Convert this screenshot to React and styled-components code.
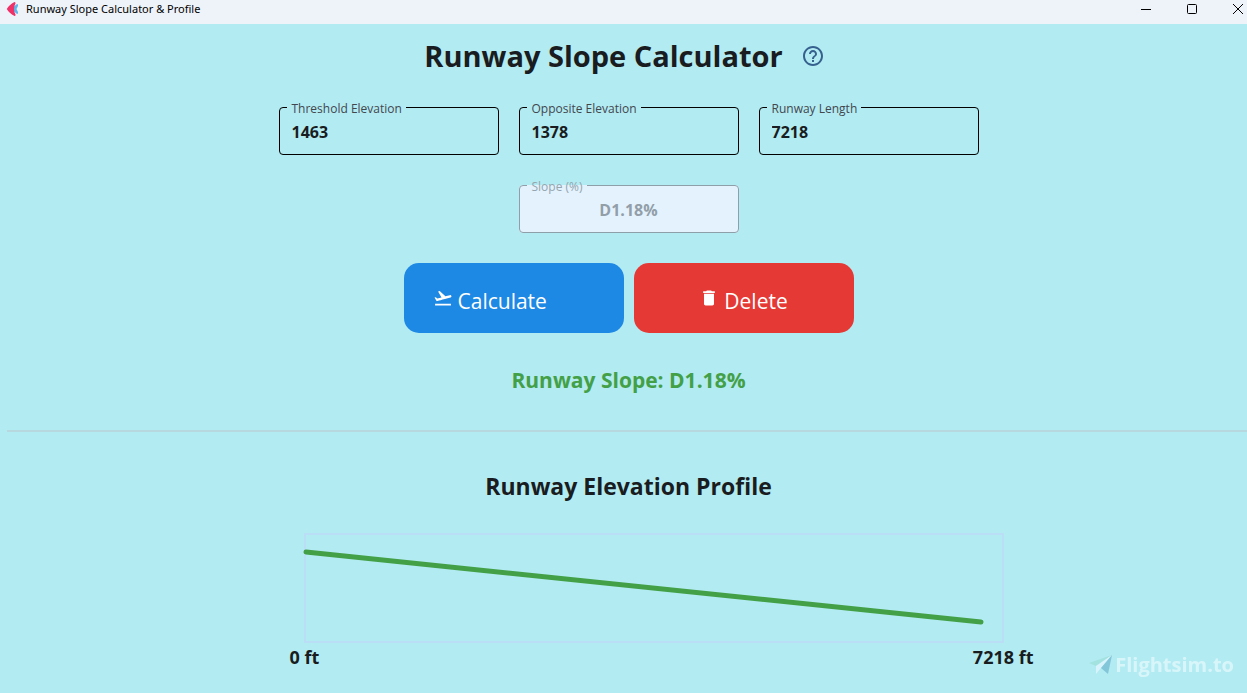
import React, { useState } from 'react'
import styled, { createGlobalStyle } from 'styled-components'
import { MdDelete, MdFlightTakeoff, MdHelpOutline } from 'react-icons/md'

const GlobalStyle = createGlobalStyle`
    * {
        box-sizing: border-box;
    }
    body {
        margin: 0;
        background-color: #b2ebf2;
        color: #191c20;
        font-family: "Open Sans", "Noto Sans", sans-serif;
    }
    button, input {
        font-family: inherit;
    }
`

const Window = styled.div`
    min-height: 100vh;
    display: flex;
    flex-direction: column;
`

const TitleBar = styled.header`
    height: 24px;
    padding: 0 1px 7px 6px;
    display: flex;
    align-items: center;
    background-color: #eef3fa;
    color: #000;
`

const AppTitle = styled.span`
    flex: 1;
    margin-left: 7px;
    font-family: "Noto Sans", sans-serif;
    font-size: 11px;
    line-height: 16px;
`

const WindowControls = styled.div`
    display: flex;
    gap: 30px;
`

const WindowButton = styled.button`
    width: 16px;
    height: 16px;
    padding: 0;
    border: none;
    background: none;
    display: grid;
    place-items: center;
    cursor: pointer;
`

const Main = styled.main`
    flex: 1;
    display: flex;
    flex-direction: column;
`

const Section = styled.section`
    padding: ${({ $top }) => $top}px 0 0 10px;
    display: flex;
    flex-direction: column;
    align-items: center;
`

const Heading = styled.div`
    display: flex;
    align-items: center;
    gap: 10px;
    margin-bottom: 23px;
`

const Title = styled.h1`
    margin: 0;
    font-size: 29px;
    font-weight: 700;
    line-height: 40px;
`

const HelpButton = styled.button`
    width: 40px;
    height: 40px;
    padding: 0;
    border: none;
    border-radius: 50%;
    background: none;
    color: #36618e;
    font-size: 24px;
    display: grid;
    place-items: center;
    cursor: pointer;
`

const Row = styled.div`
    display: flex;
    flex-wrap: wrap;
    justify-content: center;
    gap: ${({ $gap }) => $gap}px;
    margin-bottom: ${({ $bottom }) => $bottom}px;
`

const FieldBox = styled.fieldset`
    width: 220px;
    height: 56px;
    min-width: 0;
    margin: 0;
    padding: 0 7px;
    border: 1px solid ${({ $disabled }) => ($disabled ? '#8f9fa9' : '#000')};
    border-radius: 4px;
    background-color: ${({ $disabled }) => ($disabled ? '#e3f2fd' : 'transparent')};
`

const Legend = styled.legend`
    height: 17px;
    padding: 1px 4px 0 5px;
    color: ${({ $disabled }) => ($disabled ? '#93a5ad' : '#42474e')};
    font-size: 12px;
    line-height: 17px;
`

const Input = styled.input`
    display: block;
    width: 100%;
    height: 32px;
    padding: 0 5px;
    border: none;
    outline: none;
    background: none;
    color: #191c20;
    font-size: 16px;
    font-weight: 700;
    text-align: ${({ $center }) => ($center ? 'center' : 'left')};
    &:disabled {
        color: #929ea8;
    }
`

const ActionButton = styled.button`
    width: 220px;
    height: 70px;
    padding: 0 29px;
    border: none;
    border-radius: 15px;
    background-color: ${({ $color }) => $color};
    color: #fff;
    font-size: 21px;
    line-height: 28px;
    display: flex;
    align-items: center;
    justify-content: ${({ $align }) => $align};
    gap: 5px;
    cursor: pointer;
    svg {
        width: 20px;
        height: 20px;
    }
    span {
        padding-top: 6px;
    }
`

const Result = styled.output`
    color: #43a047;
    font-size: 21px;
    font-weight: 700;
    line-height: 28px;
`

const Divider = styled.hr`
    width: auto;
    margin: 36px 0 0 7px;
    border: none;
    border-top: 2px solid #b8d8e0;
`

const Subtitle = styled.h2`
    margin: 0 0 31px;
    font-size: 23px;
    font-weight: 700;
    line-height: 32px;
`

const Profile = styled.div`
    width: 100%;
    max-width: 810px;
`

const ChartFrame = styled.div`
    margin: 0 30px 0 80px;
    border: 2px solid #b9def5;
    svg {
        display: block;
        width: 100%;
    }
`

const Scale = styled.div`
    display: flex;
    justify-content: space-between;
    padding-left: 66px;
    font-size: 18px;
    font-weight: 700;
    line-height: 28px;
`

const Watermark = styled.a`
    position: fixed;
    right: 13px;
    bottom: 12px;
    display: flex;
    align-items: center;
    gap: 2px;
    color: #d8f6fa;
    font-size: 20px;
    font-weight: 700;
    line-height: 32px;
    text-decoration: none;
`

const AppLogo = () => (
    <svg width="13" height="16" viewBox="0 0 13 16" aria-hidden="true">
        <path d="M5 8 11 3Q12.500 3 12 5L10.500 8l1.500 3q.5 2-1 2Z" fill="#5cb8ea" />
        <path d="M.8 8Q3 4 8.500 1 9.800 1 9.500 2.500 8 5 8 8t1.500 5.500q.3 1.500-1 1.500Q3 12 .8 8Z" fill="#ee3167" />
    </svg>
)

const PlaneLogo = () => (
    <svg width="24" height="22" viewBox="0 0 24 22" aria-hidden="true">
        <path d="M23 1 0 9l7 3Z" fill="#a2e2df" />
        <path d="M23 1 7 12v8Z" fill="#d8f3fb" />
        <path d="M23 1 7 20l5-6Z" fill="#9bd4e2" />
        <path d="M23 1 12 14l7 6Z" fill="#83c5d9" />
    </svg>
)

const Field = ({ id, label, value, disabled, onChange }) => (
    <FieldBox $disabled={disabled}>
        <Legend $disabled={disabled}>
            <label htmlFor={id}>{label}</label>
        </Legend>
        <Input id={id} value={value} disabled={disabled} $center={disabled} onChange={onChange} />
    </FieldBox>
)

const getSlope = ({ threshold, opposite, length }) => {
    const slope = ((opposite - threshold) / length) * 100
    if (!Number.isFinite(slope)) return ''
    return `${slope < 0 ? 'D' : 'U'}${Math.abs(slope).toFixed(2)}%`
}

const initial = { threshold: '1463', opposite: '1378', length: '7218' }

const App = () => {
    const [values, setValues] = useState(initial)
    const [result, setResult] = useState(initial)
    const slope = getSlope(result)
    const descending = Number(result.opposite) < Number(result.threshold)

    const update = (key) => (e) => setValues({ ...values, [key]: e.target.value })

    const clear = () => {
        const empty = { threshold: '', opposite: '', length: '' }
        setValues(empty)
        setResult(empty)
    }

    return (
        <Window>
            <GlobalStyle />
            <TitleBar>
                <AppLogo />
                <AppTitle>Runway Slope Calculator &amp; Profile</AppTitle>
                <WindowControls>
                    <WindowButton aria-label="Minimize">
                        <svg width="12" height="12" fill="none" stroke="#000"><path d="M1 6.500h10" /></svg>
                    </WindowButton>
                    <WindowButton aria-label="Maximize">
                        <svg width="12" height="12" fill="none" stroke="#000"><rect x="1.500" y="1.500" width="9" height="9" rx="1" /></svg>
                    </WindowButton>
                    <WindowButton aria-label="Close">
                        <svg width="12" height="12" fill="none" stroke="#000"><path d="m1 1 10 10M11 1 1 11" /></svg>
                    </WindowButton>
                </WindowControls>
            </TitleBar>
            <Main>
                <Section $top={12}>
                    <Heading>
                        <Title>Runway Slope Calculator</Title>
                        <HelpButton aria-label="Help"><MdHelpOutline /></HelpButton>
                    </Heading>
                    <Row $gap={20} $bottom={22}>
                        <Field id="threshold" label="Threshold Elevation" value={values.threshold} onChange={update('threshold')} />
                        <Field id="opposite" label="Opposite Elevation" value={values.opposite} onChange={update('opposite')} />
                        <Field id="length" label="Runway Length" value={values.length} onChange={update('length')} />
                    </Row>
                    <Row $gap={20} $bottom={30}>
                        <Field id="slope" label="Slope (%)" value={slope} disabled />
                    </Row>
                    <Row $gap={10} $bottom={33}>
                        <ActionButton $color="#1e88e5" $align="flex-start" onClick={() => setResult(values)}>
                            <MdFlightTakeoff />
                            <span>Calculate</span>
                        </ActionButton>
                        <ActionButton $color="#e53935" $align="center" onClick={clear}>
                            <MdDelete />
                            <span>Delete</span>
                        </ActionButton>
                    </Row>
                    <Result>Runway Slope: {slope}</Result>
                </Section>
                <Divider />
                <Section $top={38}>
                    <Subtitle>Runway Elevation Profile</Subtitle>
                    <Profile>
                        <ChartFrame>
                            <svg viewBox="0 0 696 106" overflow="visible" role="img" aria-label="Elevation profile">
                                {slope && (
                                    <line
                                        x1="0"
                                        y1={descending ? 17 : 87}
                                        x2="675"
                                        y2={descending ? 87 : 17}
                                        stroke="#43a047"
                                        strokeWidth="5"
                                        strokeLinecap="round"
                                    />
                                )}
                            </svg>
                        </ChartFrame>
                        <Scale>
                            <span>0 ft</span>
                            <span>{result.length || 0} ft</span>
                        </Scale>
                    </Profile>
                </Section>
            </Main>
            <Watermark href="#">
                <PlaneLogo />
                Flightsim.to
            </Watermark>
        </Window>
    )
}

export default App
